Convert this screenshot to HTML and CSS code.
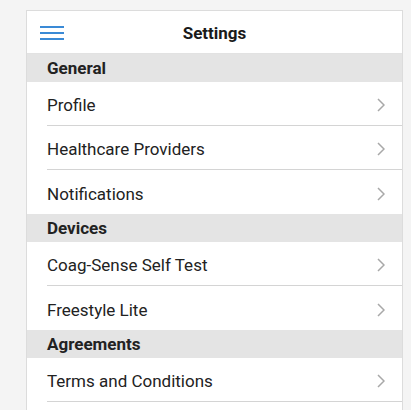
FILE: index.html
```html
<!DOCTYPE html>
<html lang="en">
<head>
    <meta charset="UTF-8">
    <meta name="viewport" content="width=device-width, initial-scale=1.0">
    <title>Settings</title>
    <link rel="stylesheet" href="styles.css">
</head>
<body>
    <div class="panel">
        <div class="header">
            <span class="menu-btn">
                <svg width="24" height="14" viewBox="0 0 24 14"><path d="M0 1h24M0 7h24M0 13h24" stroke="#3a8ad6" stroke-width="2"/></svg>
            </span>
            <h1>Settings</h1>
        </div>

        <div class="section">General</div>
        <div class="item"><span>Profile</span><svg class="chev" width="8" height="14" viewBox="0 0 8 14"><path d="M1 1l6 6-6 6" fill="none" stroke="#a8a8a8" stroke-width="1.5"/></svg></div>
        <div class="item"><span>Healthcare Providers</span><svg class="chev" width="8" height="14" viewBox="0 0 8 14"><path d="M1 1l6 6-6 6" fill="none" stroke="#a8a8a8" stroke-width="1.5"/></svg></div>
        <div class="item"><span>Notifications</span><svg class="chev" width="8" height="14" viewBox="0 0 8 14"><path d="M1 1l6 6-6 6" fill="none" stroke="#a8a8a8" stroke-width="1.5"/></svg></div>

        <div class="section">Devices</div>
        <div class="item"><span>Coag-Sense Self Test</span><svg class="chev" width="8" height="14" viewBox="0 0 8 14"><path d="M1 1l6 6-6 6" fill="none" stroke="#a8a8a8" stroke-width="1.5"/></svg></div>
        <div class="item"><span>Freestyle Lite</span><svg class="chev" width="8" height="14" viewBox="0 0 8 14"><path d="M1 1l6 6-6 6" fill="none" stroke="#a8a8a8" stroke-width="1.5"/></svg></div>

        <div class="section">Agreements</div>
        <div class="item"><span>Terms and Conditions</span><svg class="chev" width="8" height="14" viewBox="0 0 8 14"><path d="M1 1l6 6-6 6" fill="none" stroke="#a8a8a8" stroke-width="1.5"/></svg></div>
    </div>
</body>
</html>
```

FILE: styles.css
```css
* {
    box-sizing: border-box;
    font-family: Roboto, 'Liberation Sans', Arial, sans-serif;
}

body {
    margin: 0;
    padding: 10px 0 0 26px;
    background-color: #f4f4f4;
    color: #222;
    overflow: hidden;
}

.panel {
    width: 377px;
    padding-bottom: 20px;
    background-color: white;
    border: 1px solid #dcdcdc;
    border-bottom: none;
}

.header {
    position: relative;
    height: 43px;
    padding-top: 2px;
    display: flex;
    align-items: center;
    justify-content: center;
    border-bottom: 1px solid #e2e2e2;
}

.menu-btn {
    position: absolute;
    left: 13px;
    top: 15px;
    display: flex;
}

h1 {
    margin: 0;
    font-size: 17px;
    font-weight: 700;
    color: #1a1a1a;
}

.section {
    height: 28px;
    line-height: 27px;
    padding: 1px 0 0 20px;
    background-color: #e4e4e4;
    font-size: 17px;
    font-weight: 700;
    color: #222;
}

.item {
    height: 44px;
    margin-left: 20px;
    padding: 3px 17px 0 0;
    display: flex;
    align-items: center;
    justify-content: space-between;
    border-bottom: 1px solid #d4d4d4;
    font-size: 17px;
    color: #222;
}

.item:has(+ .section) {
    border-bottom: none;
}
```
